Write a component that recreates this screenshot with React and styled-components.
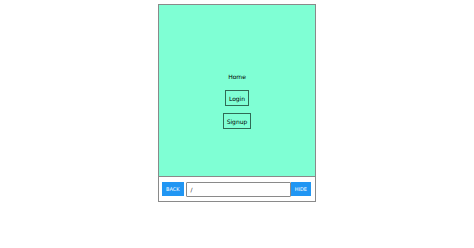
import React from "react";
import styled, { createGlobalStyle } from "styled-components";

const Global = createGlobalStyle`
  html, body { margin: 0; padding: 0; background: #fff; }
  body { font-family: "DejaVu Sans", sans-serif; }
`;

const Frame = styled.div`
  width: 158px;
  margin: 4px auto 0;
  border: 1px solid #8a8a8a;
  box-sizing: border-box;
  display: flex;
  flex-direction: column;
`;

const Screen = styled.div`
  height: 172px;
  background: #7fffd4;
  display: flex;
  flex-direction: column;
  align-items: center;
  justify-content: flex-start;
  gap: 7px;
  border-bottom: 1px solid #8a8a8a;
  padding-top: 68px;
  box-sizing: border-box;
`;

const Title = styled.div`
  font-size: 6px;
  color: #000;
  line-height: 7px;
  margin-bottom: 3px;
`;

const NavButton = styled.div`
  font-size: 6px;
  color: #000;
  line-height: 7px;
  border: 1px solid #2f6b55;
  padding: 3.5px 3px;
`;

const Bar = styled.div`
  display: flex;
  align-items: center;
  padding: 0 4px 0 3px;
  height: 24px;
  box-sizing: border-box;
`;

const BlueButton = styled.div`
  background: #2196f3;
  color: #fff;
  font-size: 5px;
  height: 14px;
  padding: 0 ${(p) => p.$px}px;
  display: flex;
  align-items: center;
  justify-content: center;
  box-sizing: border-box;
`;

const Input = styled.div`
  flex: 1;
  height: 15px;
  margin-left: 2px;
  border: 1px solid #8a8a8a;
  border-radius: 1px;
  background: #fff;
  font-size: 6px;
  color: #222;
  display: flex;
  align-items: center;
  padding-left: 4px;
  box-sizing: border-box;
`;

export default function App() {
  return (
    <>
      <Global />
      <Frame>
        <Screen>
          <Title>Home</Title>
          <NavButton>Login</NavButton>
          <NavButton>Signup</NavButton>
        </Screen>
        <Bar>
          <BlueButton $px={4}>BACK</BlueButton>
          <Input>/</Input>
          <BlueButton $px={4}>HIDE</BlueButton>
        </Bar>
      </Frame>
    </>
  );
}
